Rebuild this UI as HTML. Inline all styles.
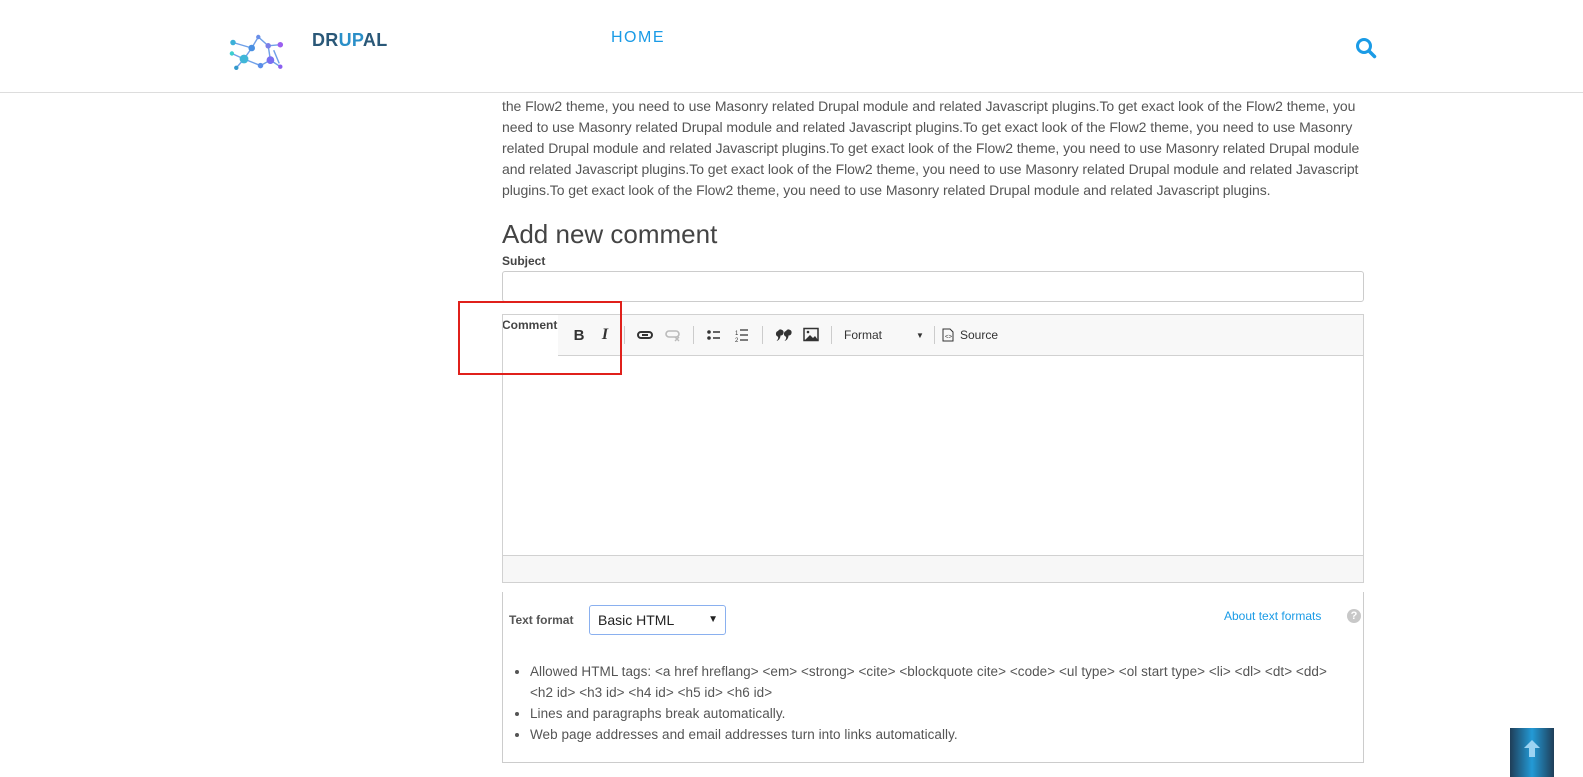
<!DOCTYPE html>
<html><head><meta charset="utf-8"><style>
*{margin:0;padding:0;box-sizing:border-box}
body{width:1583px;height:777px;overflow:hidden;background:#fff;font-family:"Liberation Sans",sans-serif;color:#555;position:relative}
.a{position:absolute}
#hdr{left:0;top:0;width:1583px;height:93px;background:#fff;border-bottom:1px solid #ddd;z-index:5}
.p{left:502px;top:75px;width:880px;overflow:hidden;font-size:14px;line-height:21px;color:#555;white-space:nowrap;letter-spacing:-0.06px}
.tb{display:flex;align-items:center;font-size:13px;color:#333}
.sep{width:1px;height:18px;background:#ccc;margin:0 6px}
</style></head><body>
<div id="hdr" class="a">
 <div class="a" style="left:222px;top:26px;width:70px;height:50px">
  <svg width="66" height="44" viewBox="0 0 60 40">
   <g stroke-width="1.3" fill="none">
    <path d="M10 15 L27 20 L20 30 L9 25 M20 30 L13 38 M27 20 L33 10 L42 18 L53 17 M42 18 L44 31 L35 36 L20 30 M44 31 L53 37 M47 22 L52 34" stroke="#6fa0e8"/>
   </g>
   <circle cx="10" cy="15" r="2.5" fill="#3bb0d8"/><circle cx="9" cy="25" r="2" fill="#3ccfcf"/>
   <circle cx="20" cy="30" r="4" fill="#3fb6d8"/><circle cx="13" cy="38" r="2" fill="#39c"/>
   <circle cx="27" cy="20" r="3" fill="#4a90e2"/><circle cx="33" cy="10" r="2" fill="#6a8ee8"/>
   <circle cx="42" cy="18" r="2.5" fill="#7b7fe8"/><circle cx="53" cy="17" r="2.5" fill="#9b5ff0"/>
   <circle cx="44" cy="31" r="3.5" fill="#7a6ff0"/><circle cx="35" cy="36" r="2.5" fill="#5a8ee8"/>
   <circle cx="53" cy="37" r="2" fill="#8a5ff0"/>
  </svg>
 </div>
 <div class="a" style="left:312px;top:30px;font-size:18px;font-weight:bold;color:#2a5878;letter-spacing:0.3px">DR<span style="color:#2a8fc8">UP</span>AL</div>
 <div class="a" style="left:611px;top:29px;font-size:16px;color:#1a9be6;letter-spacing:1.5px">HOME</div>
 <svg class="a" style="left:1355px;top:37px" width="22" height="22" viewBox="0 0 22 22"><circle cx="9" cy="9" r="6.5" stroke="#1a9be6" stroke-width="3" fill="none"/><path d="M14 14 L19.5 19.5" stroke="#1a9be6" stroke-width="3.5" stroke-linecap="round"/></svg>
</div>
<div class="a p">and related Javascript plugins.To get exact look of the Flow2 theme, you need to use Masonry related Drupal plugins.To get exact look of<br>the Flow2 theme, you need to use Masonry related Drupal module and related Javascript plugins.To get exact look of the Flow2 theme, you<br>need to use Masonry related Drupal module and related Javascript plugins.To get exact look of the Flow2 theme, you need to use Masonry<br>related Drupal module and related Javascript plugins.To get exact look of the Flow2 theme, you need to use Masonry related Drupal module<br>and related Javascript plugins.To get exact look of the Flow2 theme, you need to use Masonry related Drupal module and related Javascript<br>plugins.To get exact look of the Flow2 theme, you need to use Masonry related Drupal module and related Javascript plugins.</div>
<div class="a" style="left:502px;top:219px;font-size:26px;color:#444;letter-spacing:0px">Add new comment</div>
<div class="a" style="left:502px;top:254px;font-size:12px;font-weight:bold;color:#444">Subject</div>
<div class="a" style="left:502px;top:271px;width:862px;height:31px;border:1px solid #ccc;border-radius:3px"></div>
<div class="a" style="left:502px;top:318px;font-size:12px;font-weight:bold;color:#444">Comment</div>
<div class="a" style="left:502px;top:314px;width:862px;height:269px;border:1px solid #d1d1d1"></div>
<div class="a" style="left:558px;top:315px;width:805px;height:41px;background:#f8f8f8;border-bottom:1px solid #d1d1d1"></div>
<div class="a tb" style="left:566px;top:325px;height:20px">
 <span style="font-weight:bold;font-size:15px;width:26px;text-align:center">B</span>
 <span style="font-style:italic;font-weight:bold;font-family:'Liberation Serif',serif;font-size:16px;width:26px;text-align:center">I</span>
 <span class="sep"></span>
 <svg width="28" height="16" viewBox="0 0 28 16"><rect x="7" y="5" width="14" height="6" rx="3" fill="none" stroke="#333" stroke-width="2"/><path d="M11 8 H17" stroke="#333" stroke-width="2"/></svg>
 <svg width="28" height="16" viewBox="0 0 28 16"><rect x="7" y="4" width="13" height="6" rx="3" fill="none" stroke="#bbb" stroke-width="1.6"/><path d="M16 10 L20 14 M20 10 L16 14" stroke="#bbb" stroke-width="1.4"/></svg>
 <span class="sep"></span>
 <svg width="28" height="16" viewBox="0 0 28 16"><circle cx="9" cy="5" r="1.8" fill="#333"/><circle cx="9" cy="11" r="1.8" fill="#333"/><path d="M13 5 H20 M13 11 H20" stroke="#333" stroke-width="1.4"/></svg>
 <svg width="28" height="16" viewBox="0 0 28 16"><text x="7" y="8" font-size="6" fill="#333">1</text><text x="7" y="15" font-size="6" fill="#333">2</text><path d="M12 3 H20 M12 8 H20 M12 13 H20" stroke="#333" stroke-width="1.3"/></svg>
 <span class="sep"></span>
 <svg width="28" height="16" viewBox="0 0 28 16"><path d="M9 4 a3 3 0 1 1 2.5 4.5 c0 3 -2 5 -4 5.5 c1.5 -1.5 2 -3 1.5 -4.3 a3 3 0 0 1 0 -5.7Z M17 4 a3 3 0 1 1 2.5 4.5 c0 3 -2 5 -4 5.5 c1.5 -1.5 2 -3 1.5 -4.3 a3 3 0 0 1 0 -5.7Z" fill="#333"/></svg>
 <svg width="28" height="16" viewBox="0 0 28 16"><rect x="7" y="1.5" width="14" height="12" fill="none" stroke="#333" stroke-width="1.5"/><path d="M8 13 L13 8 L16 11 L18 9 L21 13Z" fill="#333"/><circle cx="11" cy="5" r="1.3" fill="#333"/></svg>
 <span class="sep"></span>
 <span style="margin-left:6px;width:72px;font-size:12px">Format</span>
 <span style="font-size:8px;width:12px">▼</span>
 <span class="sep"></span>
 <svg width="14" height="14" viewBox="0 0 14 14"><path d="M2 1 H9 L12 4 V13 H2Z" fill="none" stroke="#333"/><text x="4" y="10.5" font-size="6" fill="#333">&lt;&gt;</text></svg>
 <span style="margin-left:5px;font-size:12px">Source</span>
</div>
<div class="a" style="left:503px;top:555px;width:860px;height:27px;background:#f7f7f7;border-top:1px solid #d1d1d1"></div>
<div class="a" style="left:458px;top:301px;width:164px;height:74px;border:2px solid #e0201b"></div>
<div class="a" style="left:502px;top:592px;width:862px;height:171px;border:1px solid #ccc;border-top:none"></div>
<div class="a" style="left:509px;top:613px;font-size:12px;font-weight:bold;color:#555">Text format</div>
<div class="a" style="left:589px;top:605px;width:137px;height:30px;border:1px solid #8ab0ef;border-radius:3px;font-size:14px;color:#222;padding:6px 8px">Basic HTML<span style="position:absolute;right:7px;top:8px;font-size:10px">▼</span></div>
<div class="a" style="left:1224px;top:609px;font-size:12px;color:#1a9be6">About text formats</div>
<div class="a" style="left:1347px;top:609px;width:14px;height:14px;border-radius:50%;background:#c8c8c8;color:#fff;font-size:11px;font-weight:bold;text-align:center;line-height:14px">?</div>
<ul class="a" style="left:530px;top:661px;width:830px;font-size:13.5px;line-height:21px;color:#555;white-space:nowrap;letter-spacing:0.05px">
 <li>Allowed HTML tags: &lt;a href hreflang&gt; &lt;em&gt; &lt;strong&gt; &lt;cite&gt; &lt;blockquote cite&gt; &lt;code&gt; &lt;ul type&gt; &lt;ol start type&gt; &lt;li&gt; &lt;dl&gt; &lt;dt&gt; &lt;dd&gt;<br>&lt;h2 id&gt; &lt;h3 id&gt; &lt;h4 id&gt; &lt;h5 id&gt; &lt;h6 id&gt;</li>
 <li>Lines and paragraphs break automatically.</li>
 <li>Web page addresses and email addresses turn into links automatically.</li>
</ul>
<div class="a" style="left:1510px;top:728px;width:44px;height:49px;background:linear-gradient(90deg,#1f3e58,#239ad6 50%,#1f3e58)">
 <svg width="44" height="42" viewBox="0 0 44 42"><path d="M22 12 L30 20 H25 V29 H19 V20 H14Z" fill="#9cd3f2"/></svg>
</div>
</body></html>
